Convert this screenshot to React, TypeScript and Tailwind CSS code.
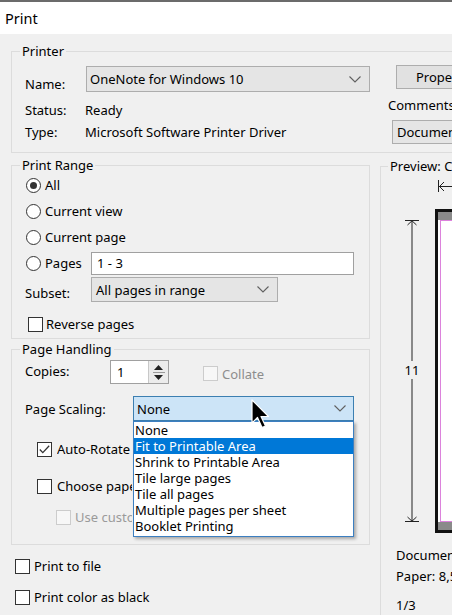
import React from "react";

const Chevron = () => (
  <svg width="12" height="7" viewBox="0 0 12 7" className="shrink-0">
    <polyline points="0.5,0.5 6,6 11.5,0.5" fill="none" stroke="#606060" strokeWidth="1.1" />
  </svg>
);

const CheckBox = ({ checked = false, disabled = false }: { checked?: boolean; disabled?: boolean }) => (
  <span
    className={
      disabled
        ? "w-[15px] h-[15px] shrink-0 border border-[#cccccc] bg-[#f7f7f7] flex items-center justify-center"
        : "w-[15px] h-[15px] shrink-0 border border-[#333333] bg-white flex items-center justify-center"
    }
  >
    {checked && (
      <svg width="11" height="9" viewBox="0 0 11 9">
        <polyline points="0.8,4.5 3.8,7.6 10.2,0.8" fill="none" stroke="#333" strokeWidth="1.3" />
      </svg>
    )}
  </span>
);

const Radio = ({ checked = false }: { checked?: boolean }) => (
  <span className="w-[15px] h-[15px] shrink-0 rounded-full border border-[#333333] bg-white flex items-center justify-center">
    {checked && <span className="w-[7px] h-[7px] rounded-full bg-[#333333]" />}
  </span>
);

const scalingItems = [
  "None",
  "Fit to Printable Area",
  "Shrink to Printable Area",
  "Tile large pages",
  "Tile all pages",
  "Multiple pages per sheet",
  "Booklet Printing",
];

export default function App() {
  return (
    <div
      className="w-[452px] h-[615px] overflow-hidden bg-[#f0f0f0] text-black text-[13px] leading-[18px]"
      style={{ fontFamily: '"Segoe UI", "Noto Sans", sans-serif' }}
    >
      <div className="h-[2px] bg-[#6b6b6b]" />
      <div className="h-[32px] bg-white flex items-center pl-[5px] text-[14.5px]">Print</div>

      <div className="relative pl-[11px] pt-[8px]">
        {/* Printer group */}
        <fieldset className="w-[460px] h-[111px] border border-[#dcdcdc]">
          <legend className="ml-[8px] px-[2px] leading-[18px]">Printer</legend>
          <div className="flex pl-[13px]">
            <div className="w-[345px] flex flex-col">
              <div className="flex mt-[6px] h-[26px]">
                <span className="w-[61px] mt-[9px]">Name:</span>
                <div className="w-[284px] h-[26px] bg-[#e5e5e5] border border-[#adadad] flex items-center justify-between pl-[3px] pr-[8px]">
                  <span>OneNote for Windows 10</span>
                  <Chevron />
                </div>
              </div>
              <div className="flex mt-[9px]">
                <span className="w-[60px]">Status:</span>
                <span>Ready</span>
              </div>
              <div className="flex mt-[4px]">
                <span className="w-[60px]">Type:</span>
                <span>Microsoft Software Printer Driver</span>
              </div>
            </div>
            <div className="ml-[18px] flex flex-col">
              <div className="ml-[8px] mt-[5px] w-[90px] h-[24px] bg-[#e1e1e1] border border-[#adadad] flex items-center pl-[19px] whitespace-nowrap">
                Properties
              </div>
              <span className="mt-[7px] whitespace-nowrap">Comments &amp; Forms:</span>
              <div className="ml-[4px] mt-[6px] w-[90px] h-[24px] bg-[#e5e5e5] border border-[#adadad] flex items-center pl-[4px] whitespace-nowrap">
                Document and Markups
              </div>
            </div>
          </div>
        </fieldset>

        <div className="flex mt-[3px] items-start">
          {/* Left column */}
          <div className="w-[359px] flex flex-col">
            {/* Print Range */}
            <fieldset className="w-[359px] h-[183px] border border-[#dcdcdc]">
              <legend className="ml-[8px] px-[2px] leading-[18px]">Print Range</legend>
              <div className="flex flex-col pl-[14px]">
                <div className="flex items-center gap-[4px] h-[22px]">
                  <Radio checked />
                  <span>All</span>
                </div>
                <div className="flex items-center gap-[4px] h-[26px] mt-[2px]">
                  <Radio />
                  <span>Current view</span>
                </div>
                <div className="flex items-center gap-[4px] h-[26px]">
                  <Radio />
                  <span>Current page</span>
                </div>
                <div className="flex items-center h-[26px]">
                  <Radio />
                  <span className="ml-[4px] w-[46px]">Pages</span>
                  <div className="w-[263px] h-[23px] bg-white border border-[#a0a0a0] flex items-center pl-[5px]">1 - 3</div>
                </div>
                <div className="flex items-center h-[25px] mt-[1px] -ml-[1px]">
                  <span className="w-[66px] mt-[6px]">Subset:</span>
                  <div className="w-[187px] h-[25px] bg-[#e5e5e5] border border-[#adadad] flex items-center justify-between pl-[4px] pr-[8px]">
                    <span>All pages in range</span>
                    <Chevron />
                  </div>
                </div>
                <div className="flex items-center gap-[3px] h-[18px] mt-[13px] ml-[2px]">
                  <CheckBox />
                  <span>Reverse pages</span>
                </div>
              </div>
            </fieldset>

            {/* Page Handling */}
            <fieldset className="w-[359px] h-[205px] mt-[1px] border border-[#dcdcdc]">
              <legend className="ml-[8px] px-[2px] leading-[18px]">Page Handling</legend>
              <div className="flex flex-col pl-[13px]">
                <div className="flex items-center h-[24px] mt-[2px]">
                  <span className="w-[85px] mt-[-2px]">Copies:</span>
                  <div className="flex h-[24px] border border-[#a0a0a0] bg-white">
                    <div className="w-[37px] flex items-center pl-[6px]">1</div>
                    <div className="w-[20px] border-l border-[#c8c8c8] bg-[#ececec] flex flex-col items-center justify-center gap-[2px]">
                      <svg width="9" height="5" viewBox="0 0 9 5">
                        <polygon points="4.5,0 9,5 0,5" fill="#222" />
                      </svg>
                      <span className="w-[12px] h-[1px] bg-[#9a9a9a]" />
                      <svg width="9" height="5" viewBox="0 0 9 5">
                        <polygon points="0,0 9,0 4.5,5" fill="#222" />
                      </svg>
                    </div>
                  </div>
                  <div className="flex items-center gap-[4px] ml-[34px] mt-[3px]">
                    <CheckBox disabled />
                    <span className="text-[#8d8d8d]">Collate</span>
                  </div>
                </div>
                <div className="flex items-center h-[25px] mt-[12px]">
                  <span className="w-[108px]">Page Scaling:</span>
                  <div className="w-[221px] h-[25px] bg-[#cce4f7] border border-[#3c7fb1] flex items-center justify-between pl-[3px] pr-[7px]">
                    <span>None</span>
                    <Chevron />
                  </div>
                </div>
                <div className="flex items-center gap-[5px] h-[18px] mt-[19px] ml-[12px]">
                  <CheckBox checked />
                  <span className="w-[75px] overflow-hidden whitespace-nowrap">Auto-Rotate</span>
                </div>
                <div className="flex items-center gap-[5px] h-[18px] mt-[19px] ml-[12px]">
                  <CheckBox />
                  <span className="w-[75px] overflow-hidden whitespace-nowrap">Choose paper</span>
                </div>
                <div className="flex items-center gap-[4px] h-[18px] mt-[13px] ml-[31px]">
                  <CheckBox disabled />
                  <span className="w-[57px] overflow-hidden whitespace-nowrap text-[#9a9a9a]">Use custom</span>
                </div>
              </div>
            </fieldset>

            <div className="flex items-center gap-[4px] h-[18px] mt-[12px] ml-[4px]">
              <CheckBox />
              <span>Print to file</span>
            </div>
            <div className="flex items-center gap-[4px] h-[18px] mt-[13px] ml-[4px]">
              <CheckBox />
              <span>Print color as black</span>
            </div>
          </div>

          {/* Preview */}
          <fieldset className="ml-[10px] mt-[1px] w-[100px] h-[520px] border border-[#dcdcdc] shrink-0">
            <legend className="ml-[7px] px-[2px] leading-[18px] whitespace-nowrap">Preview: Composite</legend>
            <svg width="72" height="360" viewBox="0 0 72 360" className="block">
              <line x1="57.5" y1="5" x2="57.5" y2="17" stroke="#222" strokeWidth="1" />
              <line x1="58" y1="11.5" x2="72" y2="11.5" stroke="#222" strokeWidth="1" />
              <polyline points="63,7 58.5,11.5 63,16" fill="none" stroke="#222" strokeWidth="1" />
              <line x1="24" y1="45.5" x2="38" y2="45.5" stroke="#222" strokeWidth="1" />
              <polyline points="26.5,50 31,45.8 35.5,50" fill="none" stroke="#222" strokeWidth="1" />
              <line x1="31" y1="46" x2="31" y2="186" stroke="#222" strokeWidth="1" />
              <line x1="31" y1="204" x2="31" y2="346" stroke="#222" strokeWidth="1" />
              <polyline points="26.5,342 31,346.2 35.5,342" fill="none" stroke="#222" strokeWidth="1" />
              <line x1="24" y1="346.5" x2="38" y2="346.5" stroke="#222" strokeWidth="1" />
              <text
                x="31"
                y="200"
                textAnchor="middle"
                fontSize="13"
                fill="#000"
                style={{ fontFamily: '"Segoe UI", "Noto Sans", sans-serif' }}
              >
                11
              </text>
              <rect x="55.5" y="35.5" width="40" height="321" fill="#ffffff" stroke="#111" strokeWidth="3" />
              <rect x="57" y="37" width="40" height="8" fill="#8a8a8a" />
              <rect x="57" y="347" width="40" height="8" fill="#8a8a8a" />
              <rect x="59.5" y="45.5" width="40" height="301" fill="none" stroke="#dc82dc" strokeWidth="1" />
            </svg>
            <div className="pl-[15px] mt-[11px] whitespace-nowrap">Document: 8,5 x 11,0 in</div>
            <div className="pl-[15px] mt-[3px] whitespace-nowrap">Paper: 8,5 x 11,0 in</div>
            <div className="pl-[15px] mt-[11px] whitespace-nowrap">1/3</div>
          </fieldset>
        </div>

        {/* Dropdown list overlay */}
        <div className="absolute left-[133px] top-[387px] w-[221px] h-[116px] bg-white border border-[#3c7fc1] shadow-[2px_2px_3px_rgba(0,0,0,0.3)] z-10 flex flex-col">
          {scalingItems.map((item, i) => (
            <div
              key={item}
              className={
                i === 1
                  ? "h-[16px] leading-[16px] pl-[1px] bg-[#0078d7] text-white whitespace-nowrap"
                  : "h-[16px] leading-[16px] pl-[1px] whitespace-nowrap"
              }
            >
              {item}
            </div>
          ))}
        </div>

        {/* Mouse cursor */}
        <svg
          className="absolute left-[251px] top-[365px] z-20"
          width="20"
          height="31"
          viewBox="0 0 20 31"
        >
          <polygon
            points="1,1 1,24 6.5,18.5 11,28.5 14.5,27 10,17.5 17.5,17.5"
            fill="#000"
            stroke="#fff"
            strokeWidth="1.2"
            strokeLinejoin="round"
          />
        </svg>
      </div>
    </div>
  );
}
